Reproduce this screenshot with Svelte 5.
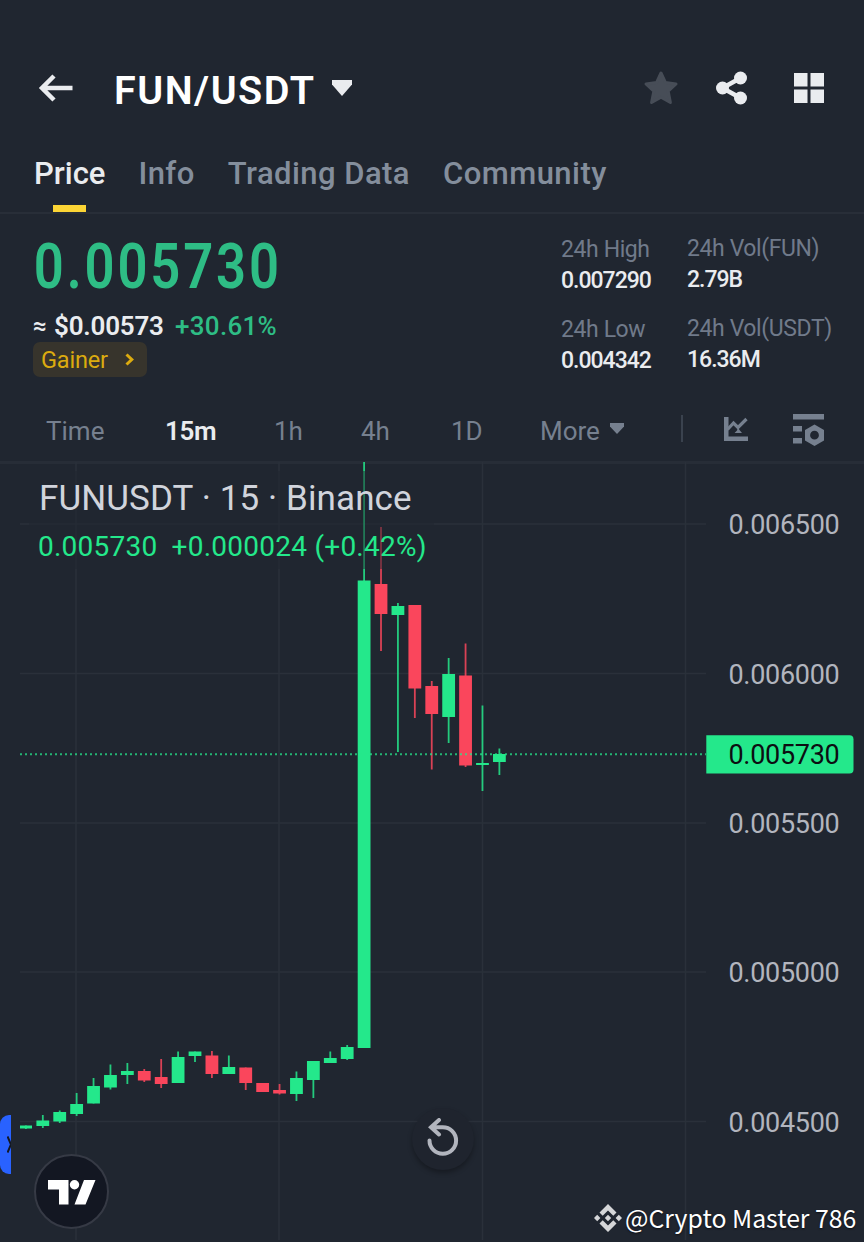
<script lang="ts">
	interface Candle {
		up: boolean;
		high: number;
		top: number;
		bottom: number;
		low: number;
	}

	const tabs = ['Price', 'Info', 'Trading Data', 'Community'];
	const intervals = ['Time', '15m', '1h', '4h', '1D'];

	let activeTab = $state('Price');
	let activeInterval = $state('15m');

	const stats = [
		{ label: '24h High', value: '0.007290' },
		{ label: '24h Vol(FUN)', value: '2.79B' },
		{ label: '24h Low', value: '0.004342' },
		{ label: '24h Vol(USDT)', value: '16.36M' }
	];

	// Chart geometry, in chart units
	const FIRST_X = 25.9;
	const STEP = 16.91;
	const columns = [76, 279, 482.5, 685.5];
	const levels = [
		{ price: '0.006500', y: 62 },
		{ price: '0.006000', y: 211.5 },
		{ price: '0.005500', y: 361 },
		{ price: '0.005000', y: 510 },
		{ price: '0.004500', y: 659.5 }
	];

	// direction, high, body top, body bottom, low
	const rows: [number, number, number, number, number][] = [
		[1, 663.5, 663.5, 666.5, 667],
		[1, 653, 658.5, 664, 666],
		[1, 648.5, 650, 659.5, 661],
		[1, 631, 642, 652, 654],
		[1, 616, 624, 641.5, 641.5],
		[1, 602.5, 613, 625.5, 627.5],
		[1, 601, 609, 613, 622],
		[0, 607, 609, 618.5, 620],
		[0, 597, 615, 622, 626],
		[1, 589.5, 595, 621, 621],
		[1, 589.5, 589.5, 594, 600],
		[0, 589, 593.5, 612, 616],
		[1, 593.5, 605, 612, 612],
		[0, 605.5, 605.5, 621, 628],
		[0, 621, 621, 630, 630],
		[0, 622, 628, 631.5, 632.5],
		[1, 609.5, 616, 632, 639],
		[1, 599, 599, 618, 636],
		[1, 589.5, 596, 601, 601],
		[1, 583, 585, 597, 598],
		[1, 0, 118.5, 586, 586],
		[0, 65, 122, 152, 189],
		[1, 141, 144, 153, 290],
		[0, 143, 143, 226.5, 256],
		[0, 219, 224, 252, 307.5],
		[1, 196, 212, 255, 281],
		[0, 181.5, 213.5, 303.5, 305],
		[1, 243.5, 301, 303, 329],
		[1, 286.5, 292, 300, 313]
	];

	const candles: Candle[] = rows.map(([dir, high, top, bottom, low]) => ({
		up: dir === 1,
		high,
		top,
		bottom,
		low
	}));
</script>

<div class="screen">
	<header class="topbar">
		<svg class="back" width="36" height="30" viewBox="0 0 36 30">
			<path d="M34.500 15H4M16 3L4 15L16 27" />
		</svg>
		<h1>FUN/USDT</h1>
		<svg class="caret" width="22" height="18" viewBox="0 0 22 18">
			<path d="M1 1H21V5.500L11 17L1 5.500Z" fill="#eaecef" />
		</svg>
		<div class="actions">
			<svg width="36" height="36" viewBox="0 0 36 36">
				<path
					d="M18 3L22.500 12.600L33 14L25.200 21.200L27.400 32.500L18 27.200L8.600 32.500L10.800 21.200L3 14L13.500 12.600Z"
					fill="#474d57"
					stroke="#474d57"
					stroke-width="3"
					stroke-linejoin="round"
				/>
			</svg>
			<svg width="34" height="36" viewBox="0 0 34 36" fill="#eaecef">
				<path d="M26.500 8L8.500 18L26.500 28" fill="none" stroke="#eaecef" stroke-width="4.500" />
				<circle cx="26.500" cy="8" r="6.500" />
				<circle cx="8.500" cy="18" r="6.500" />
				<circle cx="26.500" cy="28" r="6.500" />
			</svg>
			<svg width="30" height="30" viewBox="0 0 30 30" fill="#eaecef">
				<path d="M0 0H13.500V13.500H0ZM16.500 0H30V13.500H16.500ZM0 16.500H13.500V30H0ZM16.500 16.500H30V30H16.500Z" />
			</svg>
		</div>
	</header>

	<nav class="tabs">
		{#each tabs as tab}
			<button class="tab" class:active={activeTab === tab} onclick={() => (activeTab = tab)}>
				{tab}
			</button>
		{/each}
	</nav>

	<section class="summary">
		<div class="quote">
			<div class="last">0.005730</div>
			<div class="fiat">
				<span class="approx">≈</span>
				<span class="dollars">$0.00573</span>
				<span class="change">+30.61%</span>
			</div>
			<div class="tag">
				<span>Gainer</span>
				<svg width="9" height="13" viewBox="0 0 9 13">
					<path d="M1.500 1.500L6.800 6.500L1.500 11.500" />
				</svg>
			</div>
		</div>
		<div class="stats">
			{#each stats as stat}
				<div class="stat">
					<div class="stat-label">{stat.label}</div>
					<div class="stat-value">{stat.value}</div>
				</div>
			{/each}
		</div>
	</section>

	<div class="intervals">
		{#each intervals as interval}
			<button
				class="interval"
				class:active={activeInterval === interval}
				onclick={() => (activeInterval = interval)}
			>
				{interval}
			</button>
		{/each}
		<button class="interval more">
			More
			<svg width="14" height="12" viewBox="0 0 14 12">
				<path d="M0 0H14V3.500L7 11L0 3.500Z" fill="#76808f" />
			</svg>
		</button>
		<span class="divider"></span>
		<svg class="draw" width="24" height="26" viewBox="0 0 24 26">
			<path d="M0 1H4.500V20.500H24V25H0Z" fill="#76808f" />
			<path d="M3.500 13.500L9.500 7L14 11.500L22.500 3" fill="none" stroke="#76808f" stroke-width="3.200" />
			<path d="M14 11.500L15.500 14L18 17H10.500L13 14.500Z" fill="#76808f" />
		</svg>
		<svg class="settings" width="31" height="32" viewBox="0 0 31 32" fill="#76808f">
			<path d="M0 0H31V5.500H0ZM0 12H9V17.500H0ZM0 24H9V29.500H0Z" />
			<path
				fill-rule="evenodd"
				d="M21.500 10.500L31 16V26.500L21.500 32L12 26.500V16ZM21.500 16.800A4.400 4.400 0 1 0 21.500 25.600A4.400 4.400 0 1 0 21.500 16.800Z"
			/>
		</svg>
	</div>

	<div class="chart">
		<svg class="plot" width="864" height="780" viewBox="0 0 864 780">
			<!-- Grid -->
			{#each columns as x}
				<line class="grid" x1={x} x2={x} y1="0" y2="778" />
			{/each}
			{#each levels as level}
				<line class="grid" x1="20" x2="706" y1={level.y} y2={level.y} />
				<text class="axis" x="728.500" y={level.y + 10}>{level.price}</text>
			{/each}

			<!-- Candles -->
			{#each candles as candle, i}
				{@const x = FIRST_X + i * STEP}
				<g class={candle.up ? 'up' : 'down'}>
					<rect class="wick" x={x - 0.9} y={candle.high} width="1.800" height={candle.low - candle.high} />
					<rect
						x={i === 0 ? 20 : x - 6.4}
						y={candle.top}
						width={i === 0 ? 12 : 12.8}
						height={candle.bottom - candle.top}
					/>
				</g>
			{/each}

			<!-- Last price -->
			<line class="last-line" x1="20" x2="706" y1="292.200" y2="292.200" />
			<path class="last-tag" d="M706.300 273.200H849.500A4 4 0 0 1 853.500 277.200V307.500A4 4 0 0 1 849.500 311.500H706.300Z" />
			<text class="axis last-text" x="728.500" y="302">0.005730</text>
		</svg>

		<div class="legend">
			<div class="legend-title">FUNUSDT · 15 · Binance</div>
			<div class="legend-values">
				<span>0.005730</span>
				<span>+0.000024 (+0.42%)</span>
			</div>
		</div>

		<div class="drawer">
			<svg width="4" height="17" viewBox="0 0 4 17">
				<path d="M0.500 0.500L4 8.500L0.500 16.500" />
			</svg>
		</div>

		<div class="tv-logo">
			<svg width="48" height="25" viewBox="0 0 48 25" fill="#fff">
				<path d="M0 0H20.500V24.500H11V9.500H0ZM36 0H47.500L37.500 24.500H26.500Z" />
				<circle cx="26.500" cy="4.700" r="4.700" />
			</svg>
		</div>

		<button class="reset" aria-label="Reset chart">
			<svg width="34" height="40" viewBox="0 0 34 40">
				<path d="M3.500 22.500A13.300 13.300 0 1 0 16.800 9.200H5M13 2L5 9.200L13 16.500" />
			</svg>
		</button>

		<div class="watermark">
			<svg width="28" height="28" viewBox="0 0 28 28" fill="#d5d6d8">
				<path
					d="M14 0L22.500 8.500L19.300 11.700L14 6.400L8.700 11.700L5.500 8.500ZM14 28L5.500 19.500L8.700 16.300L14 21.600L19.300 16.300L22.500 19.500ZM3.200 10.800L6.400 14L3.200 17.200L0 14ZM24.800 10.800L28 14L24.800 17.200L21.600 14ZM14 10.800L17.200 14L14 17.200L10.800 14Z"
				/>
			</svg>
			<span>@Crypto Master 786</span>
		</div>
	</div>
</div>

<style>
	:global(body) {
		background: #202630;
	}

	.screen {
		width: 864px;
		height: 1242px;
		overflow: hidden;
		background: #202630;
		color: #eaecef;
		font-family: Roboto, 'Liberation Sans', sans-serif;
	}

	svg {
		display: block;
		flex: none;
	}

	button {
		padding: 0;
		border: 0;
		background: none;
		color: inherit;
		font: inherit;
		cursor: pointer;
	}

	/* Top bar */
	.topbar {
		display: flex;
		align-items: center;
		height: 82px;
		padding: 47px 40px 0 38px;
		margin-bottom: 2px;
	}

	.back path {
		fill: none;
		stroke: #eaecef;
		stroke-width: 4.5;
	}

	h1 {
		width: 217px;
		margin: 6px 0 0 40px;
		color: #fff;
		font-size: 39.500px;
		font-weight: 600;
		line-height: 50px;
		letter-spacing: 1.5px;
		white-space: nowrap;
	}

	.actions {
		display: flex;
		align-items: center;
		margin-left: auto;
	}

	.actions svg:nth-child(1) {
		margin-right: 35px;
	}

	.actions svg:nth-child(2) {
		margin-right: 46px;
	}

	/* Tabs */
	.tabs {
		display: flex;
		gap: 33px;
		height: 81px;
		padding-left: 34px;
		border-bottom: 2px solid #282e38;
	}

	.tab {
		position: relative;
		height: 81px;
		padding-top: 4px;
		color: #848e9c;
		font-size: 31px;
		font-weight: 500;
		line-height: 75px;
		letter-spacing: 0.45px;
		white-space: nowrap;
	}

	.tab.active {
		color: #eaecef;
		letter-spacing: 0;
	}

	.tab.active::after {
		content: '';
		position: absolute;
		left: 50%;
		bottom: 0;
		width: 33px;
		height: 7px;
		margin-left: -17px;
		background: #fcd535;
	}

	/* Price summary */
	.summary {
		display: flex;
		justify-content: space-between;
		height: 182px;
		padding-left: 33px;
	}

	.quote {
		padding-top: 17px;
	}

	.last {
		width: 250px;
		height: 72px;
		padding-left: 1px;
		color: #2ebd85;
		font-size: 63px;
		font-weight: 600;
		line-height: 72px;
		letter-spacing: 3.4px;
		transform: scaleX(0.835);
		transform-origin: 0 0;
	}

	.fiat {
		display: flex;
		margin-top: 6px;
		font-size: 26px;
		font-weight: 600;
		line-height: 34px;
		white-space: nowrap;
	}

	.approx {
		width: 21px;
		font-size: 24px;
	}

	.dollars {
		width: 110px;
		letter-spacing: -0.2px;
	}

	.change {
		margin-left: 11px;
		color: #2ebd85;
		font-weight: 500;
		letter-spacing: 0.3px;
	}

	.tag {
		display: flex;
		align-items: center;
		justify-content: space-between;
		box-sizing: border-box;
		width: 114px;
		height: 35px;
		margin-top: -1px;
		padding: 0 13px 0 8px;
		border-radius: 7px;
		background: #37342c;
		color: #dcab0f;
		font-size: 23.500px;
		letter-spacing: -0.2px;
	}

	.tag path {
		fill: none;
		stroke: #dcab0f;
		stroke-width: 3;
	}

	.stats {
		display: grid;
		grid-template-columns: 126px 177px;
		grid-auto-rows: 80px;
		padding-top: 20px;
	}

	.stat:nth-child(even) {
		margin-top: -1px;
	}

	.stat-label {
		color: #707a8a;
		font-size: 23px;
		line-height: 31px;
		letter-spacing: -0.4px;
		white-space: nowrap;
	}

	.stat-value {
		font-size: 23px;
		font-weight: 500;
		line-height: 31px;
		letter-spacing: -1px;
	}

	/* Intervals */
	.intervals {
		display: flex;
		align-items: center;
		height: 65px;
		border-bottom: 3px solid #272d37;
		color: #76808f;
		font-size: 26px;
	}

	.interval {
		width: 58px;
		margin-left: 46px;
		padding-top: 4px;
		text-align: left;
		white-space: nowrap;
	}

	.interval.active {
		color: #eaecef;
		font-weight: 600;
		letter-spacing: -0.4px;
	}

	.interval:nth-child(2) {
		width: 50px;
		margin-left: 61px;
	}

	.interval:nth-child(3),
	.interval:nth-child(4) {
		width: 28px;
		margin-left: 59px;
	}

	.interval:nth-child(5) {
		width: 28px;
		margin-left: 62px;
	}

	.more.interval {
		display: flex;
		align-items: center;
		gap: 10px;
		width: 84px;
		margin-left: 61px;
	}

	.more svg {
		margin-top: -4px;
	}

	.divider {
		width: 2px;
		height: 27px;
		margin-left: 57px;
		background: #3a424e;
	}

	.draw {
		margin-left: 41px;
	}

	.settings {
		margin-top: 2px;
		margin-left: 45px;
	}

	/* Chart */
	.chart {
		position: relative;
		height: 780px;
		margin-top: -2px;
	}

	.grid {
		stroke: #2a303a;
		stroke-width: 1.6;
	}

	.axis {
		fill: #b2b5be;
		font-size: 27px;
		letter-spacing: -0.3px;
	}

	.up {
		fill: #24e88b;
	}

	.down {
		fill: #fa465c;
	}

	.wick {
		opacity: 0.85;
	}

	.last-line {
		stroke: #24e88b;
		stroke-width: 2;
		stroke-dasharray: 2 3;
		opacity: 0.75;
	}

	.last-tag {
		fill: #24e88b;
	}

	.last-text {
		fill: #0c0e12;
	}

	.legend {
		position: absolute;
		left: 29px;
		top: 9px;
		box-sizing: border-box;
		width: 405px;
		height: 98px;
		padding: 1px 0 0 10px;
		background: rgba(32, 38, 48, 0.5);
		white-space: nowrap;
	}

	.legend-title {
		color: #d1d4dc;
		font-size: 35px;
		line-height: 54px;
		letter-spacing: 0.1px;
	}

	.legend-values {
		display: flex;
		gap: 14px;
		margin-left: -1px;
		color: #24e88b;
		font-size: 28px;
		line-height: 42px;
		letter-spacing: 0.25px;
	}

	.drawer {
		position: absolute;
		left: 0;
		top: 653px;
		display: flex;
		align-items: center;
		justify-content: flex-end;
		width: 11px;
		height: 59px;
		border-radius: 9px 0 0 9px;
		background: #2962ff;
	}

	.drawer path {
		fill: none;
		stroke: #131722;
		stroke-width: 2;
	}

	.tv-logo {
		position: absolute;
		left: 34px;
		top: 692px;
		display: flex;
		align-items: center;
		justify-content: center;
		box-sizing: border-box;
		width: 75px;
		height: 75px;
		border: 2.500px solid #363a45;
		border-radius: 50%;
		background: #131722;
	}

	.tv-logo svg {
		margin-top: 2px;
	}

	.reset {
		position: absolute;
		left: 412px;
		top: 646px;
		display: flex;
		justify-content: center;
		width: 62px;
		height: 62px;
		padding-top: 10px;
		border-radius: 50%;
		background: #1f242e;
		box-shadow: 0 3px 5px rgba(0, 0, 0, 0.3);
	}

	.reset path {
		fill: none;
		stroke: #b2b5be;
		stroke-width: 4;
		stroke-linecap: round;
	}

	.watermark {
		position: absolute;
		left: 594px;
		top: 740px;
		display: flex;
		align-items: center;
		gap: 3px;
		color: #fff;
		font-family: 'Noto Sans CJK SC', sans-serif;
		font-size: 24.800px;
		line-height: 32px;
		white-space: nowrap;
		text-shadow: 0 1px 2px rgba(0, 0, 0, 0.6);
	}

	.watermark span {
		margin-top: -1px;
	}
</style>
